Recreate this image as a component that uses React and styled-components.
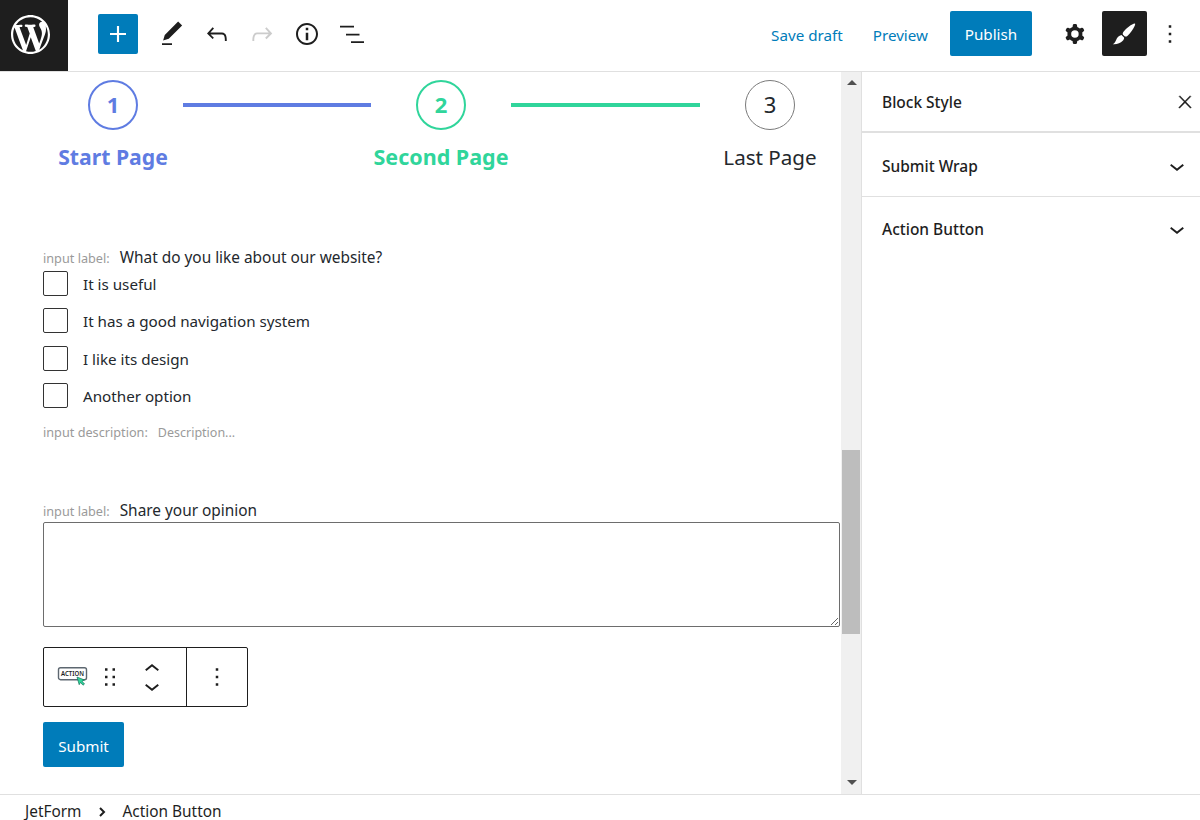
import React from "react";
import styled, { createGlobalStyle } from "styled-components";

const Global = createGlobalStyle`
  html, body { margin: 0; padding: 0; height: 100%; overflow: hidden; background: #fff; }
  body { font-family: "Noto Sans", "Open Sans", sans-serif; color: #1e1e1e; }
  #root { height: 100%; }
  * { box-sizing: border-box; }
`;

const Page = styled.div`
  width: 1200px;
  height: 820px;
  display: flex;
  flex-direction: column;
  overflow: hidden;
`;

const TopBar = styled.header`
  height: 72px;
  flex: none;
  display: flex;
  align-items: center;
  border-bottom: 1px solid #e0e0e0;
  padding-bottom: 3px;
`;

const Logo = styled.div`
  width: 68px;
  height: 71px;
  align-self: flex-start;
  background: #1e1e1e;
  display: flex;
  align-items: center;
  padding: 0 0 3px 11px;
  margin-right: 30px;
  color: #fff;
`;

const AddButton = styled.div`
  width: 40px;
  height: 40px;
  margin-right: 11px;
  background: #007cba;
  color: #fff;
  border-radius: 2px;
  display: flex;
  align-items: center;
  justify-content: center;
`;

const ToolGroup = styled.div`
  display: flex;
  align-items: center;
`;

const Tool = styled.div`
  width: 45px;
  height: 45px;
  display: flex;
  align-items: center;
  justify-content: center;
  margin-right: ${(p) => p.$gap || 0}px;
  color: ${(p) => (p.$muted ? "#cccccc" : "#1e1e1e")};
`;

const TopRight = styled.div`
  margin-left: auto;
  display: flex;
  align-items: center;
`;

const LinkButton = styled.div`
  font-size: 15.2px;
  color: #007cba;
  padding-top: 1px;
  margin-right: ${(p) => p.$gap}px;
`;

const Publish = styled.div`
  width: 82px;
  height: 45px;
  background: #007cba;
  color: #fff;
  border-radius: 2px;
  font-size: 15.2px;
  padding-top: 1px;
  display: flex;
  align-items: center;
  justify-content: center;
  margin: 0 20px 1px 0;
`;

const BrushButton = styled.div`
  width: 45px;
  height: 45px;
  margin-bottom: 1px;
  background: #1e1e1e;
  border-radius: 2px;
  display: flex;
  align-items: center;
  justify-content: center;
  color: #fff;
`;

const Dots = styled.div`
  width: 46px;
  display: flex;
  justify-content: center;
  margin-right: 7px;
  color: #1e1e1e;
`;

const Body = styled.div`
  flex: 1;
  display: flex;
  min-height: 0;
`;

const Canvas = styled.main`
  width: 841px;
  padding: 8px 0 0 43px;
  flex: none;
`;

const Stepper = styled.div`
  display: flex;
  width: 797px;
  height: 167px;
  align-items: flex-start;
`;

const Step = styled.div`
  width: 140px;
  flex: none;
  display: flex;
  flex-direction: column;
  align-items: center;
  color: ${(p) => p.$color};
`;

const StepCircle = styled.div`
  width: 50px;
  height: 50px;
  border-radius: 50%;
  border: ${(p) => (p.$plain ? "1px solid #7a7a7a" : `2px solid ${p.$color}`)};
  display: flex;
  align-items: center;
  justify-content: center;
  font-size: 22px;
  padding-bottom: 2px;
  font-weight: ${(p) => (p.$plain ? 400 : 700)};
  color: ${(p) => p.$color};
`;

const StepLabel = styled.div`
  margin-top: 11px;
  font-size: ${(p) => p.$size}px;
  line-height: 32px;
  white-space: nowrap;
  font-weight: ${(p) => (p.$plain ? 400 : 700)};
`;

const StepLine = styled.div`
  flex: ${(p) => (p.$w ? `0 0 ${p.$w}px` : "1")};
  height: 4px;
  margin-top: 23px;
  background: ${(p) => p.$color};
`;

const LabelRow = styled.div`
  display: flex;
  align-items: baseline;
  height: 19px;
  white-space: nowrap;
`;

const Hint = styled.span`
  font-size: 12.7px;
  color: #9a9a9a;
  margin-right: ${(p) => p.$gap}px;
`;

const LabelText = styled.span`
  font-size: 15.4px;
  color: #23282d;
`;

const Checks = styled.div`
  display: flex;
  flex-direction: column;
  gap: 12.4px;
  margin-top: 5px;
`;

const CheckRow = styled.label`
  display: flex;
  align-items: center;
  height: 25px;
`;

const Box = styled.input`
  appearance: none;
  width: 25px;
  height: 25px;
  margin: 0 15px 0 0;
  border: 1px solid #333;
  border-radius: 2px;
  background: #fff;
  flex: none;
`;

const CheckText = styled.span`
  font-size: 15.2px;
  padding-top: 1px;
  color: #23282d;
`;

const Description = styled.div`
  display: flex;
  align-items: baseline;
  margin-top: 14.5px;
  height: 20px;
`;

const DescValue = styled.span`
  font-size: 12.5px;
  color: #9a9a9a;
`;

const SecondLabel = styled(LabelRow)`
  margin-top: 57.5px;
  height: 22.3px;
`;

const Area = styled.textarea`
  display: block;
  width: 797px;
  height: 105px;
  border: 1px solid #6d6d6d;
  border-radius: 2px;
  padding: 6px;
  margin: 0;
  background: #fff;
  resize: vertical;
  outline: none;
`;

const BlockBar = styled.div`
  display: flex;
  width: 205px;
  height: 60px;
  margin-top: 20px;
  border: 1px solid #1e1e1e;
  border-radius: 2px;
`;

const BlockMain = styled.div`
  width: 143px;
  display: flex;
  align-items: center;
  border-right: 1px solid #1e1e1e;
  padding-left: 13px;
`;

const Drag = styled.div`
  display: flex;
  margin-left: 6px;
`;

const Mover = styled.div`
  display: flex;
  flex-direction: column;
  margin-left: 12px;
`;

const MoverCell = styled.div`
  height: 17px;
  display: flex;
  align-items: center;
`;

const BlockMore = styled.div`
  flex: 1;
  display: flex;
  align-items: center;
  justify-content: center;
`;

const Submit = styled.div`
  width: 81px;
  height: 45px;
  margin-top: 15px;
  padding-top: 3px;
  background: #007cba;
  border-radius: 2px;
  color: #fff;
  font-size: 15.2px;
  display: flex;
  align-items: center;
  justify-content: center;
`;

const Scrollbar = styled.div`
  width: 21px;
  flex: none;
  background: #f0f0f0;
  border-right: 1px solid #e0e0e0;
  padding-left: 1px;
  display: flex;
  flex-direction: column;
  align-items: stretch;
`;

const ScrollArrow = styled.div`
  height: 20px;
  display: flex;
  align-items: center;
  justify-content: center;
  margin-top: ${(p) => p.$top || 0}px;
  &::before {
    content: "";
    width: 0;
    height: 0;
    border-left: 5px solid transparent;
    border-right: 5px solid transparent;
    ${(p) => (p.$up ? "border-bottom: 5px solid #505050;" : "border-top: 5px solid #505050;")}
  }
`;

const Thumb = styled.div`
  width: 18px;
  height: 184px;
  margin-top: 358px;
  background: #bdbdbd;
`;

const Sidebar = styled.aside`
  flex: 1;
`;

const SideHead = styled.div`
  height: 61px;
  border-bottom: 2px solid #e0e0e0;
  display: flex;
  align-items: center;
  justify-content: space-between;
  padding: 0 5px 0 20px;
`;

const SideRow = styled.div`
  height: ${(p) => p.$h}px;
  border-bottom: ${(p) => (p.$line ? "1px solid #e0e0e0" : "none")};
  display: flex;
  align-items: center;
  justify-content: space-between;
  padding: ${(p) => p.$shift || 0}px 8px 0 20px;
`;

const SideTitle = styled.div`
  font-size: 15.5px;
  font-weight: 500;
  color: #1e1e1e;
`;

const Footer = styled.footer`
  height: 26px;
  flex: none;
  border-top: 1px solid #e0e0e0;
  display: flex;
  align-items: center;
  padding: 8px 0 0 25px;
  font-size: 15.4px;
  line-height: 17px;
  color: #1e1e1e;
`;

const Crumb = styled.span`
  white-space: nowrap;
`;

const CrumbSep = styled.span`
  width: 41px;
  display: flex;
  justify-content: center;
`;

const Icon = ({ size = 30, d, fillRule, children, vb = "0 0 24 24", stroke }) => (
  <svg
    width={size}
    height={size}
    viewBox={vb}
    fill="currentColor"
    fillRule={fillRule}
    stroke={stroke ? "currentColor" : undefined}
    strokeWidth={stroke}
  >
    {d ? <path d={d} /> : children}
  </svg>
);

const P = {
  wp: "M20 10c0-5.51-4.49-10-10-10C4.48 0 0 4.49 0 10c0 5.52 4.48 10 10 10 5.51 0 10-4.48 10-10zM7.78 15.37L4.37 6.22c.55-.02 1.17-.08 1.17-.08.5-.06.44-1.13-.06-1.11 0 0-1.45.11-2.37.11-.18 0-.37 0-.58-.01C4.12 2.69 6.87 1.11 10 1.11c2.33 0 4.45.87 6.05 2.34-.68-.11-1.65.39-1.65 1.58 0 .74.45 1.36.9 2.1.35.61.55 1.36.55 2.46 0 1.49-1.4 5-1.4 5l-3.03-8.37c.54-.02.82-.17.82-.17.5-.05.44-1.25-.06-1.22 0 0-1.44.12-2.38.12-.87 0-2.33-.12-2.33-.12-.5-.03-.56 1.2-.06 1.22l.92.08 1.26 3.41zM17.41 10c.24-.64.74-1.87.43-4.25.7 1.29 1.05 2.71 1.05 4.25 0 3.29-1.73 6.24-4.4 7.78.97-2.59 1.94-5.2 2.92-7.78zM6.1 18.09C3.12 16.65 1.11 13.53 1.11 10c0-1.3.23-2.48.72-3.59C3.25 10.3 4.67 14.2 6.1 18.09zm4.03-6.63l2.58 6.98c-.86.29-1.76.45-2.71.45-.79 0-1.57-.11-2.29-.33.81-2.38 1.62-4.74 2.42-7.1z",
  plus: "M18 11.2h-5.2V6h-1.6v5.2H6v1.6h5.2V18h1.6v-5.2H18z",
  pencil: "M20.1 5.1L16.9 2 6.2 12.7l-1.3 4.4 4.5-1.3L20.1 5.1zM4 20.8h8v-1.5H4v1.5z",
  undo: "M18.3 11.7c-.6-.6-1.4-.9-2.3-.9H6.7l2.9-3.3-1.1-1-4.5 5L8.5 16l1-1-2.7-2.7H16c.5 0 .9.2 1.3.5 1 1 1 3.4 1 4.5v.3h1.5v-.2c0-1.5 0-4.3-1.5-5.7z",
  redo: "M15.6 6.5l-1.1 1 2.9 3.3H8c-.9 0-1.7.3-2.3.9-1.4 1.5-1.4 4.2-1.4 5.6v.2h1.5v-.3c0-1.1 0-3.5 1-4.5.3-.3.7-.5 1.3-.5h9.2L14.5 15l1.1 1.1 4.6-4.6-4.6-5z",
  info: "M12 3.2c-4.8 0-8.8 3.9-8.8 8.8 0 4.8 3.9 8.8 8.8 8.8 4.8 0 8.8-3.9 8.8-8.8 0-4.8-4-8.8-8.8-8.8zm0 16c-4 0-7.2-3.3-7.2-7.2C4.8 8 8 4.8 12 4.8s7.2 3.3 7.2 7.2c0 4-3.2 7.2-7.2 7.2zM11 17h2v-6h-2v6zm0-8h2V7h-2v2z",
  list: "M0 3.7h14v1.7H0zM6 11.7h13.5v1.7H6zM11 19.3h13v1.7H11z",
  cog: "M10.289 4.836A1 1 0 0111.275 4h1.306a1 1 0 01.987.836l.244 1.466c.787.26 1.503.679 2.108 1.218l1.393-.522a1 1 0 011.216.437l.653 1.13a1 1 0 01-.23 1.273l-1.148.944a6.025 6.025 0 010 2.435l1.149.946a1 1 0 01.23 1.272l-.653 1.13a1 1 0 01-1.216.437l-1.394-.522c-.605.54-1.32.958-2.108 1.218l-.244 1.466a1 1 0 01-.987.836h-1.306a1 1 0 01-.986-.836l-.244-1.466a5.995 5.995 0 01-2.108-1.218l-1.394.522a1 1 0 01-1.217-.436l-.653-1.131a1 1 0 01.23-1.272l1.149-.946a6.026 6.026 0 010-2.435l-1.148-.944a1 1 0 01-.23-1.272l.653-1.131a1 1 0 011.217-.437l1.393.522a5.994 5.994 0 012.108-1.218l.244-1.466zM14.929 12a3 3 0 11-6 0 3 3 0 016 0z",
  brush: "M19.8 3.6c.6 0 .4 1-.1 2-1.2 2.6-3.2 5.6-5.6 7.7-.7.6-1.5.9-2.2.6l-1.5-1.3c-.4-.7-.2-1.6.4-2.4C12.9 7.6 17.5 3.8 19.8 3.6zM9.2 12.8l2 1.9c.3.9-.3 2-1.2 2.9-1.5 1.6-4.6 3-7.8 2.6 1.4-.9 2.1-2.1 2.7-3.5.7-1.9 2.2-3.5 4.3-3.9z",
  dots: "M13 19h-2v-2h2v2zm0-6h-2v-2h2v2zm0-6h-2V5h2v2z",
  close: "M13 11.8l6.1-6.3-1-1-6.1 6.2-6.1-6.2-1 1 6.1 6.3-6.5 6.7 1 1 6.5-6.6 6.5 6.6 1-1z",
  down: "M17.5 11.6L12 16l-5.5-4.4.9-1.2L12 14l4.5-3.6 1 1.2z",
  up: "M6.5 12.4L12 8l5.5 4.4-.9 1.2L12 10l-4.5 3.6-1-1.2z",
  drag: "M8 7h2V5H8v2zm0 6h2v-2H8v2zm0 6h2v-2H8v2zm6-14v2h2V5h-2zm0 8h2v-2h-2v2zm0 6h2v-2h-2v2z",
};

const ActionIcon = () => (
  <svg width="32" height="24" viewBox="0 0 32 24">
    <rect x="1.5" y="2.7" width="28" height="12" rx="2" fill="#fff" stroke="#5d6770" strokeWidth="1.4" />
    <text x="15.5" y="11.2" textAnchor="middle" fontSize="7" fontWeight="600" fill="#1e1e1e" fontFamily="Noto Sans, sans-serif" textLength="23" lengthAdjust="spacingAndGlyphs">ACTION</text>
    <path d="M20 12l7.5 3-2.5 1.2 2.5 2.8-1.5 1.2-2.5-2.8-1.3 2.3z" fill="#30d59b" stroke="#14735a" strokeWidth="0.7" />
  </svg>
);

const CrumbChevron = () => (
  <svg width="10" height="12" viewBox="0 0 10 12" fill="none" stroke="currentColor" strokeWidth="2">
    <path d="M3 2l4 4-4 4" />
  </svg>
);

const BLUE = "#5f7ce2";
const GREEN = "#30d59b";
const DARK = "#23282d";

export default function App() {
  return (
    <Page>
      <Global />
      <TopBar>
        <Logo>
          <Icon size={39} vb="0 0 20 20" d={P.wp} />
        </Logo>
        <AddButton><Icon size={32} d={P.plus} /></AddButton>
        <ToolGroup>
          <Tool><Icon d={P.pencil} /></Tool>
          <Tool><Icon d={P.undo} /></Tool>
          <Tool $muted><Icon d={P.redo} /></Tool>
          <Tool><Icon d={P.info} /></Tool>
          <Tool><Icon size={24} d={P.list} /></Tool>
        </ToolGroup>
        <TopRight>
          <LinkButton $gap={30}>Save draft</LinkButton>
          <LinkButton $gap={22}>Preview</LinkButton>
          <Publish>Publish</Publish>
          <Tool $gap={5}><Icon d={P.cog} fillRule="evenodd" /></Tool>
          <BrushButton><Icon d={P.brush} /></BrushButton>
          <Dots><Icon d={P.dots} /></Dots>
        </TopRight>
      </TopBar>
      <Body>
        <Canvas>
          <Stepper>
            <Step $color={BLUE}>
              <StepCircle $color={BLUE}>1</StepCircle>
              <StepLabel $size={21.2}>Start Page</StepLabel>
            </Step>
            <StepLine $color={BLUE} $w={188} />
            <Step $color={GREEN}>
              <StepCircle $color={GREEN}>2</StepCircle>
              <StepLabel $size={21.5}>Second Page</StepLabel>
            </Step>
            <StepLine $color={GREEN} />
            <Step $color={DARK}>
              <StepCircle $color={DARK} $plain>3</StepCircle>
              <StepLabel $plain $size={20.6}>Last Page</StepLabel>
            </Step>
          </Stepper>
          <LabelRow>
            <Hint $gap={10}>input label:</Hint>
            <LabelText>What do you like about our website?</LabelText>
          </LabelRow>
          <Checks>
            {["It is useful", "It has a good navigation system", "I like its design", "Another option"].map((t) => (
              <CheckRow key={t}>
                <Box type="checkbox" />
                <CheckText>{t}</CheckText>
              </CheckRow>
            ))}
          </Checks>
          <Description>
            <Hint $gap={10}>input description:</Hint>
            <DescValue>Description...</DescValue>
          </Description>
          <SecondLabel>
            <Hint $gap={10}>input label:</Hint>
            <LabelText>Share your opinion</LabelText>
          </SecondLabel>
          <Area readOnly />
          <BlockBar>
            <BlockMain>
              <ActionIcon />
              <Drag><Icon d={P.drag} /></Drag>
              <Mover>
                <MoverCell><Icon d={P.up} /></MoverCell>
                <MoverCell><Icon d={P.down} /></MoverCell>
              </Mover>
            </BlockMain>
            <BlockMore><Icon d={P.dots} /></BlockMore>
          </BlockBar>
          <Submit>Submit</Submit>
        </Canvas>
        <Scrollbar>
          <ScrollArrow $up />
          <Thumb />
          <ScrollArrow $down $top={138} />
        </Scrollbar>
        <Sidebar>
          <SideHead>
            <SideTitle>Block Style</SideTitle>
            <Icon size={20} d={P.close} stroke={0.5} />
          </SideHead>
          <SideRow $h={64} $line $shift={2}>
            <SideTitle>Submit Wrap</SideTitle>
            <Icon d={P.down} />
          </SideRow>
          <SideRow $h={63}>
            <SideTitle>Action Button</SideTitle>
            <Icon d={P.down} />
          </SideRow>
        </Sidebar>
      </Body>
      <Footer>
        <Crumb>JetForm</Crumb>
        <CrumbSep><CrumbChevron /></CrumbSep>
        <Crumb>Action Button</Crumb>
      </Footer>
    </Page>
  );
}
